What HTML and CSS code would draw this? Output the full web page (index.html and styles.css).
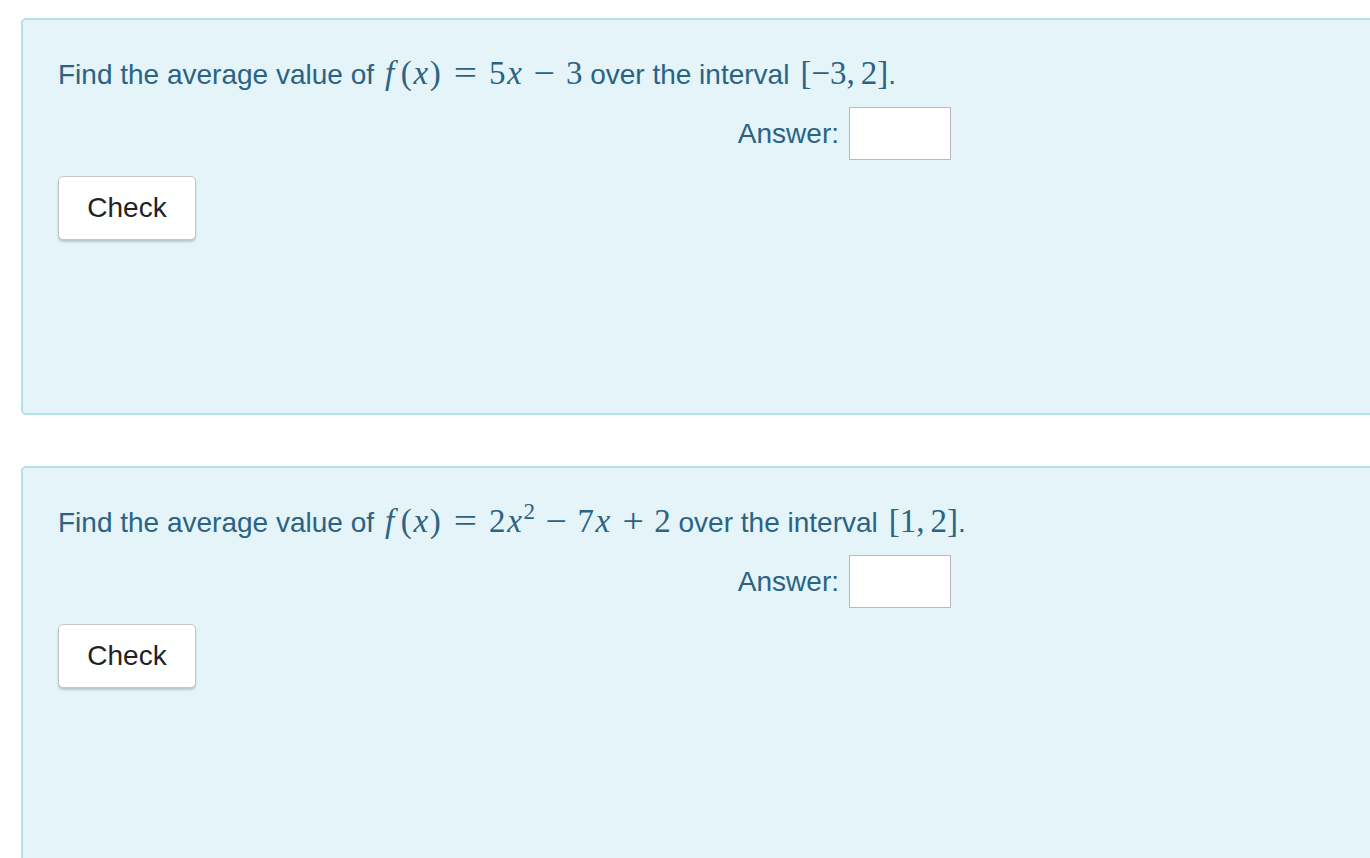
FILE: index.html
```html
<!DOCTYPE html>
<html>
<head>
	<meta charset="utf-8">
	<title>Average value</title>
	<link rel="stylesheet" href="styles.css">
</head>
<body>

	<div class="page">

		<div class="question">
			<div class="question-body">
				<p class="prompt">Find the average value of <span class="math"><i class="fn">f</i>(<i>x</i>)<span class="rel">=</span>5<i>x</i><span class="bin">−</span>3</span> over the interval <span class="math">[−3,<span class="sp"></span>2]</span>.</p>
				<div class="answer-row">
					<label for="ans-1">Answer:</label>
					<input type="text" id="ans-1">
				</div>
				<button class="check">Check</button>
			</div>
		</div>

		<div class="question">
			<div class="question-body">
				<p class="prompt">Find the average value of <span class="math"><i class="fn">f</i>(<i>x</i>)<span class="rel">=</span>2<i>x</i><sup>2</sup><span class="bin">−</span>7<i>x</i><span class="bin">+</span>2</span> over the interval <span class="math">[1,<span class="sp"></span>2]</span>.</p>
				<div class="answer-row">
					<label for="ans-2">Answer:</label>
					<input type="text" id="ans-2">
				</div>
				<button class="check">Check</button>
			</div>
		</div>

	</div>

</body>
</html>
```

FILE: styles.css
```css
* {
	margin: 0;
	padding: 0;
	box-sizing: border-box;
}

html, body {
	overflow: hidden;
}

body {
	font-family: "Liberation Sans", Arial, sans-serif;
	background: #fff;
}

.page {
	padding: 18px 0 0 21px;
}

.question {
	width: 1420px;
	min-height: 397px;
	margin-bottom: 51px;
	background-color: #e4f4f8;
	border: 2px solid #b4e0e8;
	border-radius: 5px;
	padding: 35px;
}

.question-body {
	width: 893px;
}

.prompt {
	font-size: 28px;
	line-height: 40px;
	color: #2a6384;
	white-space: nowrap;
}

/* math runs */
.math {
	font-family: "Liberation Serif", "Times New Roman", serif;
	font-size: 33px;
	line-height: 1;
	margin-left: 0.1em;
}

.math i {
	font-style: italic;
	padding: 0 0.05em;
}

.math i.fn {
	padding: 0;
	margin-right: 0.2em;
}

.math .rel {
	display: inline-block;
	transform: scaleX(1.25);
	margin: 0 0.45em;
}

.math .bin {
	display: inline-block;
	transform: scaleX(1.15);
	margin: 0 0.36em;
}

.math .sp {
	display: inline-block;
	width: 0.18em;
}

.math sup {
	font-size: 0.7em;
	vertical-align: 0.55em;
	line-height: 0;
}

.answer-row {
	display: flex;
	justify-content: flex-end;
	align-items: center;
	gap: 10px;
	margin-top: 12px;
}

.answer-row label {
	font-size: 28px;
	line-height: 40px;
	color: #2a6384;
}

.answer-row input {
	width: 102px;
	height: 53px;
	border: 1px solid #b8b8b8;
	background: #fff;
	font-size: 24px;
	padding: 0 6px;
}

.check {
	display: block;
	margin-top: 16px;
	width: 138px;
	height: 64px;
	font-family: "Liberation Sans", Arial, sans-serif;
	font-size: 28px;
	color: #222;
	background: #fff;
	border: 1px solid #c6c6c6;
	border-radius: 5px;
	box-shadow: 0 2px 2px rgba(0, 0, 0, .18);
	cursor: pointer;
}
```
